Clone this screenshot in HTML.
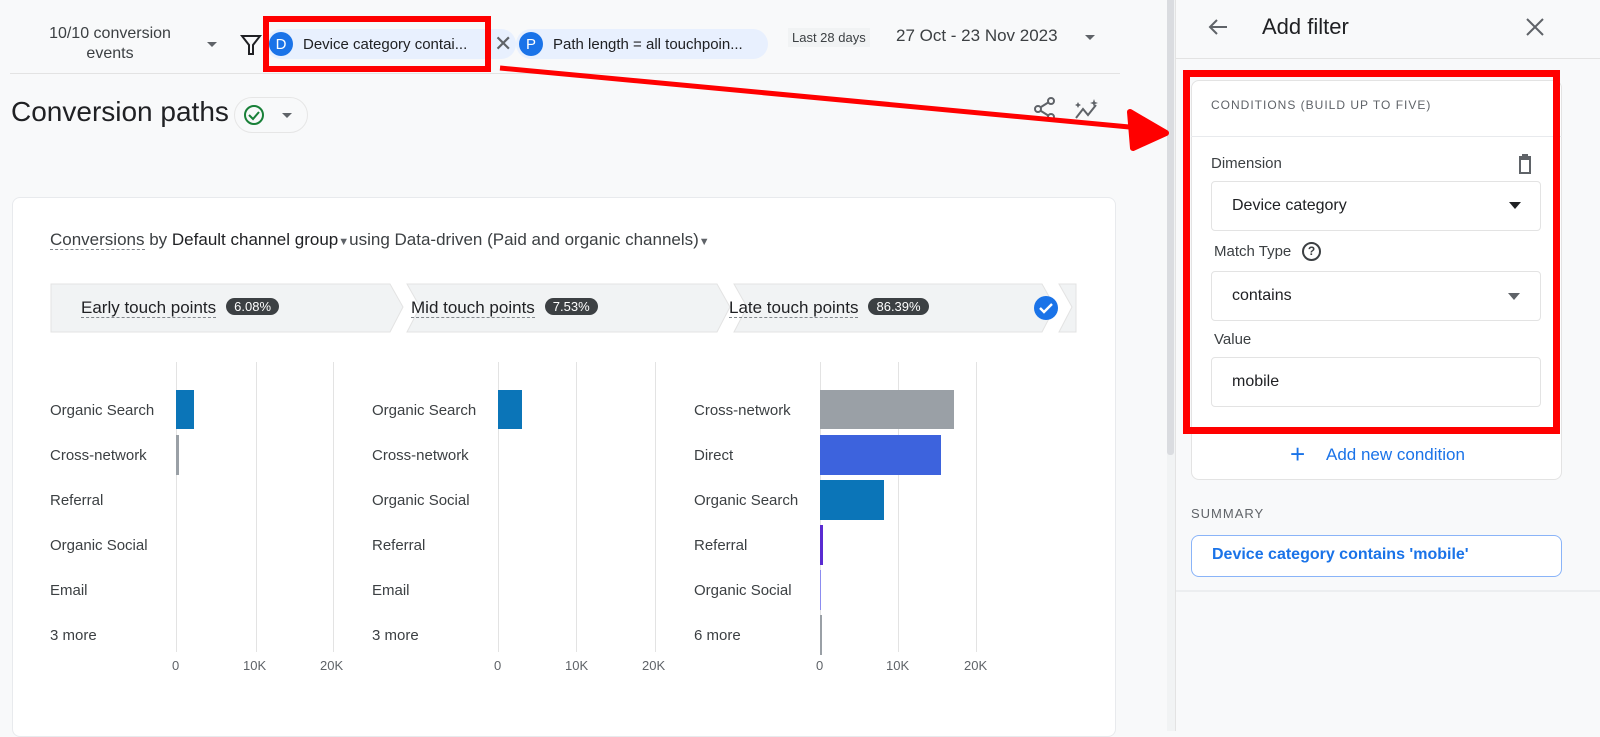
<!DOCTYPE html>
<html><head><style>
*{margin:0;padding:0;box-sizing:border-box}
body{width:1600px;height:731px;overflow:hidden;background:#f8f9fa;font-family:"Liberation Sans",Roboto,sans-serif;color:#202124;position:relative}
.a{position:absolute}
.lbl{position:absolute;font-size:15px;color:#3c4043}
.ax{position:absolute;font-size:13px;color:#5f6368}
.g{position:absolute;width:1px;background:#e3e3e3;top:362px;height:290px}
.chip{position:absolute;height:30px;border-radius:15px;background:#e8f0fe;font-size:15px;display:flex;align-items:center}
.av{width:24px;height:24px;border-radius:50%;background:#1a73e8;color:#fff;font-size:15px;display:flex;align-items:center;justify-content:center;margin:0 10px 0 3px}
.badge{display:inline-block;background:#3c4043;color:#fff;font-size:13px;border-radius:9px;padding:1px 8px;margin-left:10px;vertical-align:2px}
.dash{border-bottom:1px dashed #80868b}
.inp{position:absolute;left:1211px;width:330px;height:50px;background:#fff;border:1px solid #e3e3e3;border-radius:4px;font-size:16px;padding-left:20px;display:flex;align-items:center}
</style></head><body>
<div class="a" style="left:20px;top:24px;width:180px;text-align:center;font-size:16px;line-height:20px;color:#3c4043">10/10 conversion<br>events</div>
<div class="a" style="left:207px;top:42px;border:5px solid transparent;border-top:5px solid #5f6368"></div>
<svg class="a" style="left:240px;top:34px" width="22" height="22" viewBox="0 0 22 22"><path d="M2 2h18l-7 9v9h-4v-9z" fill="none" stroke="#202124" stroke-width="2"/></svg>
<div class="chip" style="left:266px;top:29px;width:250px"><div class="av">D</div>Device category contai...</div>
<div class="a" style="left:494px;top:31px;font-size:22px;color:#5f6368">✕</div>
<div class="chip" style="left:516px;top:29px;width:252px"><div class="av">P</div>Path length = all touchpoin...</div>
<div class="a" style="left:263px;top:16px;width:228px;height:56px;border:6px solid #f00"></div>
<div class="a" style="left:788px;top:28px;font-size:13px;color:#3c4043;background:#f1f3f4;padding:2px 4px">Last 28 days</div>
<div class="a" style="left:896px;top:26px;font-size:17px;color:#3c4043">27 Oct - 23 Nov 2023</div>
<div class="a" style="left:1085px;top:35px;border:5px solid transparent;border-top:5px solid #5f6368"></div>
<div class="a" style="left:10px;top:73px;width:1110px;height:1px;background:#e3e3e3"></div>
<div class="a" style="left:11px;top:96px;font-size:28px">Conversion paths</div>
<div class="a" style="left:234px;top:97px;width:74px;height:36px;border:1px solid #e6e6e6;border-radius:18px"></div>
<svg class="a" style="left:243px;top:104px" width="22" height="22"><circle cx="11" cy="11" r="9" fill="none" stroke="#188038" stroke-width="2"/><path d="M6 11l4 4 6-7" fill="none" stroke="#188038" stroke-width="2"/></svg>
<div class="a" style="left:282px;top:113px;border:5px solid transparent;border-top:5px solid #5f6368"></div>
<svg class="a" style="left:1030px;top:96px" width="80" height="26"><g fill="none" stroke="#5f6368" stroke-width="2"><circle cx="21" cy="5" r="3"/><circle cx="8" cy="13" r="3"/><circle cx="21" cy="21" r="3"/><path d="M11 11l8-5M11 15l8 5"/><path d="M46 22l7-9 5 6 8-10"/></g><path d="M64 3l1 3 3 1-3 1-1 3-1-3-3-1 3-1zM48 6l1 2 2 1-2 1-1 2-1-2-2-1 2-1z" fill="#5f6368"/></svg>
<div class="a" style="left:12px;top:197px;width:1104px;height:540px;background:#fff;border:1px solid #e8eaed;border-radius:8px"></div>
<div class="a" style="left:50px;top:230px;font-size:17px;color:#3c4043"><span class="dash">Conversions</span> by <span style="color:#202124">Default channel group</span><span style="font-size:11px;color:#5f6368">▼</span>using Data-driven (Paid and organic channels)<span style="font-size:11px;color:#5f6368">▼</span></div>
<svg class="a" style="left:50px;top:283px" width="1028" height="50"><g fill="#f1f3f4" stroke="#e3e3e3"><path d="M1 1H340L353 24L340 49H1Z"/><path d="M357 1H667L680 24L667 49H357L370 24Z"/><path d="M684 1H992L1005 24L992 49H684L697 24Z"/><path d="M1009 1H1026V49H1009L1022 24Z"/></g><circle cx="996" cy="25" r="12" fill="#1a73e8"/><path d="M990 25l4 4 8-8" fill="none" stroke="#fff" stroke-width="2.4"/></svg>
<div class="a" style="left:81px;top:298px;font-size:17px"><span class="dash">Early touch points</span><span class="badge">6.08%</span></div>
<div class="a" style="left:411px;top:298px;font-size:17px"><span class="dash">Mid touch points</span><span class="badge">7.53%</span></div>
<div class="a" style="left:729px;top:298px;font-size:17px"><span class="dash">Late touch points</span><span class="badge">86.39%</span></div>
<!-- chart 1 -->
<div class="g" style="left:176px"></div><div class="g" style="left:256px"></div><div class="g" style="left:333px"></div>
<div class="g" style="left:498px"></div><div class="g" style="left:576px"></div><div class="g" style="left:655px"></div>
<div class="g" style="left:820px"></div><div class="g" style="left:898px"></div><div class="g" style="left:976px"></div>
<div class="a" style="left:176px;top:390px;width:18px;height:39px;background:#0b75b8"></div>
<div class="a" style="left:176px;top:435px;width:3px;height:40px;background:#9aa0a6"></div>
<div class="a" style="left:498px;top:390px;width:24px;height:39px;background:#0b75b8"></div>
<div class="a" style="left:820px;top:390px;width:134px;height:39px;background:#9aa0a6"></div>
<div class="a" style="left:820px;top:435px;width:121px;height:40px;background:#3d63dd"></div>
<div class="a" style="left:820px;top:480px;width:64px;height:40px;background:#0b75b8"></div>
<div class="a" style="left:820px;top:525px;width:3px;height:40px;background:#5a2bd1"></div>
<div class="a" style="left:820px;top:570px;width:1px;height:40px;background:#8c8cf0"></div>
<div class="a" style="left:820px;top:615px;width:2px;height:40px;background:#9aa0a6"></div>
<div class="lbl" style="left:50px;top:402px">Organic Search</div><div class="lbl" style="left:50px;top:447px">Cross-network</div><div class="lbl" style="left:50px;top:492px">Referral</div><div class="lbl" style="left:50px;top:537px">Organic Social</div><div class="lbl" style="left:50px;top:582px">Email</div><div class="lbl" style="left:50px;top:627px">3 more</div>
<div class="lbl" style="left:372px;top:402px">Organic Search</div><div class="lbl" style="left:372px;top:447px">Cross-network</div><div class="lbl" style="left:372px;top:492px">Organic Social</div><div class="lbl" style="left:372px;top:537px">Referral</div><div class="lbl" style="left:372px;top:582px">Email</div><div class="lbl" style="left:372px;top:627px">3 more</div>
<div class="lbl" style="left:694px;top:402px">Cross-network</div><div class="lbl" style="left:694px;top:447px">Direct</div><div class="lbl" style="left:694px;top:492px">Organic Search</div><div class="lbl" style="left:694px;top:537px">Referral</div><div class="lbl" style="left:694px;top:582px">Organic Social</div><div class="lbl" style="left:694px;top:627px">6 more</div>
<div class="ax" style="left:172px;top:658px">0</div><div class="ax" style="left:243px;top:658px">10K</div><div class="ax" style="left:320px;top:658px">20K</div>
<div class="ax" style="left:494px;top:658px">0</div><div class="ax" style="left:565px;top:658px">10K</div><div class="ax" style="left:642px;top:658px">20K</div>
<div class="ax" style="left:816px;top:658px">0</div><div class="ax" style="left:886px;top:658px">10K</div><div class="ax" style="left:964px;top:658px">20K</div>
<!-- scrollbar & panel -->
<div class="a" style="left:1167px;top:0;width:8px;height:731px;background:#f1f3f4"></div>
<div class="a" style="left:1167px;top:0;width:7px;height:455px;background:#dadce0;border-radius:0 0 3px 3px"></div>
<div class="a" style="left:1175px;top:0;width:425px;height:731px;background:#f8f9fa;border-left:1px solid #e3e3e3"></div>
<svg class="a" style="left:1206px;top:15px" width="24" height="24"><path d="M21 12H4M11 5l-7 7 7 7" fill="none" stroke="#5f6368" stroke-width="2"/></svg>
<div class="a" style="left:1262px;top:14px;font-size:22px">Add filter</div>
<svg class="a" style="left:1524px;top:16px" width="22" height="22"><path d="M3 3l16 16M19 3L3 19" stroke="#5f6368" stroke-width="2"/></svg>
<div class="a" style="left:1176px;top:58px;width:424px;height:1px;background:#e3e3e3"></div>
<div class="a" style="left:1191px;top:80px;width:371px;height:400px;background:#fff;border:1px solid #e3e3e3;border-radius:8px"></div>
<div class="a" style="left:1191px;top:136px;width:371px;height:1px;background:#e8eaed"></div>
<div class="a" style="left:1211px;top:98px;font-size:12px;letter-spacing:1px;color:#5f6368">CONDITIONS (BUILD UP TO FIVE)</div>
<div class="a" style="left:1211px;top:155px;font-size:15px;color:#3c4043">Dimension</div>
<svg class="a" style="left:1516px;top:154px" width="18" height="20"><path d="M3 3h12M7 3V1h4v2M4 5h10v14H4z" fill="none" stroke="#5f6368" stroke-width="2"/></svg>
<div class="inp" style="top:181px">Device category</div>
<div class="a" style="left:1509px;top:202px;border:6px solid transparent;border-top:7px solid #202124"></div>
<div class="a" style="left:1214px;top:243px;font-size:15px;color:#3c4043">Match Type</div>
<div class="a" style="left:1302px;top:242px;width:19px;height:19px;border:2px solid #3c4043;border-radius:50%;font-size:12px;text-align:center;line-height:15px;font-weight:bold;color:#3c4043">?</div>
<div class="inp" style="top:271px">contains</div>
<div class="a" style="left:1508px;top:293px;border:6px solid transparent;border-top:7px solid #5f6368"></div>
<div class="a" style="left:1214px;top:331px;font-size:15px;color:#3c4043">Value</div>
<div class="inp" style="top:357px">mobile</div>
<div class="a" style="left:1183px;top:70px;width:377px;height:364px;border:7px solid #f00"></div>
<div class="a" style="left:1290px;top:440px;font-size:26px;color:#1a73e8;line-height:28px">+</div>
<div class="a" style="left:1326px;top:445px;font-size:17px;color:#1a73e8">Add new condition</div>
<div class="a" style="left:1191px;top:506px;font-size:13px;letter-spacing:1px;color:#5f6368">SUMMARY</div>
<div class="a" style="left:1191px;top:535px;width:371px;height:42px;border:1px solid #8ab4f8;border-radius:8px;background:#fff;font-size:16px;font-weight:bold;color:#1a73e8;padding:10px 20px">Device category contains 'mobile'</div>
<div class="a" style="left:1176px;top:590px;width:424px;height:2px;background:#eceef0"></div>
<!-- arrow -->
<svg class="a" style="left:0;top:0" width="1600" height="731"><path d="M500 68L1140 128" stroke="#f00" stroke-width="5"/><path d="M1130 112L1166 133L1133 148Z" fill="#f00" stroke="#f00" stroke-width="6" stroke-linejoin="round"/></svg>
</body></html>
